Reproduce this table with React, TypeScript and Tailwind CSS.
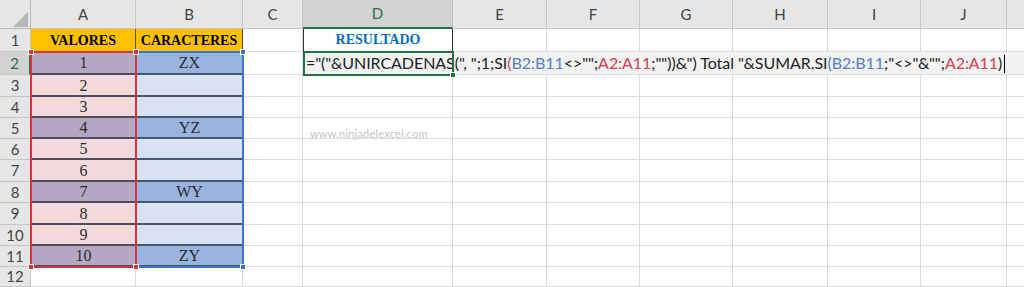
import React from 'react'

const columns = ['A', 'B', 'C', 'D', 'E', 'F', 'G', 'H', 'I', 'J', 'K']
const rowHeights = ['h-[23px]', 'h-[23px]', 'h-[22px]', 'h-[21px]', 'h-[21px]', 'h-[21px]', 'h-[22px]', 'h-[21px]', 'h-[22px]', 'h-[21px]', 'h-[21px]', 'h-[20px]']
const valores = ['1', '2', '3', '4', '5', '6', '7', '8', '9', '10']
const caracteres: Record<number, string> = { 0: 'ZX', 3: 'YZ', 6: 'WY', 9: 'ZY' }

const gridCols = 'grid grid-rows-1 grid-cols-[31px_105px_107px_60px_150px_94px_93px_93px_95px_93px_86px_60px]'
const cell = 'border-r border-b border-[#dadada]'
const serif = "font-['Liberation_Serif',serif]"

function HeaderRow() {
  return (
    <div className={`${gridCols} h-[29px]`}>
      <div className="relative bg-[#e6e6e6] border-r border-b border-[#bdbdbd]">
        <svg className="absolute left-[13px] top-[12px]" width="15" height="15" viewBox="0 0 15 15">
          <polygon points="15,0 15,15 0,15" fill="#b7b7b7" />
        </svg>
      </div>
      {columns.map((c) =>
        c === 'D' ? (
          <div key={c} className="flex items-center justify-center bg-[#d2d2d2] border-r border-[#bdbdbd] border-b-2 border-b-[#217346] text-[15px] leading-none text-[#217346]">
            {c}
          </div>
        ) : (
          <div key={c} className="flex items-center justify-center bg-[#e6e6e6] border-r border-b border-[#c6c6c6] text-[15px] leading-none text-[#444]">
            {c === 'K' ? '' : c}
          </div>
        )
      )}
    </div>
  )
}

function RowHeader({ n }: { n: number }) {
  if (n === 2) {
    return (
      <div className="flex items-center justify-center bg-[#d2d2d2] border-b border-[#c6c6c6] border-r-2 border-r-[#217346] text-[15px] leading-none text-[#217346]">
        {n}
      </div>
    )
  }
  return (
    <div className="flex items-center justify-center bg-[#e6e6e6] border-r border-b border-[#c6c6c6] text-[15px] leading-none text-[#444]">
      {n}
    </div>
  )
}

function Formula() {
  return (
    <span className="whitespace-nowrap text-[16px] leading-[20px] text-[#222] font-['Lato',sans-serif] tracking-[-0.05px]">
      ="("&amp;UNIRCADENAS(", ";1;SI<span className="text-[#d6405a]">(</span>
      <span className="text-[#4f7fd0]">B2:B11</span>&lt;&gt;"";
      <span className="text-[#d6404e]">A2:A11</span>;""))&amp;") Total "&amp;SUMAR.SI<span className="text-[#4f7fd0]">(</span>
      <span className="text-[#4f7fd0]">B2:B11</span>;"&lt;&gt;"&amp;"";
      <span className="text-[#d6404e]">A2:A11</span>)
      <span className="inline-block w-px h-[18px] bg-black align-middle ml-[2px]" />
    </span>
  )
}

// table cell with the thick dark rule under it
function TableCell({ fill, rule, text }: { fill: string; rule: string; text: string }) {
  return (
    <div className={`flex flex-col min-h-0 ${fill}`}>
      <div className={`flex-1 min-h-0 flex items-center justify-center pt-[1px] ${serif} text-[16px] leading-[18px] text-[#2b2b2b]`}>{text}</div>
      <div className={`h-[2px] shrink-0 ${rule}`} />
    </div>
  )
}

function DataRow({ n }: { n: number }) {
  const i = n - 2
  const strong = i % 3 === 0
  const h = rowHeights[n - 1]

  if (n === 1) {
    return (
      <div className={`${gridCols} ${h}`}>
        <RowHeader n={1} />
        <div className={`flex items-end justify-center pb-[2px] bg-[#ffc000] border-r border-r-[#5a4a2a] ${serif} font-bold text-[14px] leading-[18px] text-black`}>VALORES</div>
        <div className={`flex items-end justify-center pb-[2px] bg-[#ffc000] border-r border-r-[#5a4a2a] ${serif} font-bold text-[14px] leading-[18px] text-black`}>CARACTERES</div>
        <div className={cell} />
        <div className={`flex items-end justify-center pb-[2px] border-x border-x-[#333] border-b border-b-[#dadada] ${serif} font-bold text-[14px] leading-[18px] text-[#0070c0]`}>RESULTADO</div>
        {columns.slice(4).map((c) => <div key={c} className={cell} />)}
      </div>
    )
  }

  if (n === 12) {
    return (
      <div className={`${gridCols} ${h}`}>
        <RowHeader n={12} />
        {columns.map((c) => <div key={c} className={cell} />)}
      </div>
    )
  }

  return (
    <div className={`${gridCols} ${h}`}>
      <RowHeader n={n} />
      <TableCell fill={strong ? 'bg-[#b4a7c4]' : 'bg-[#f2d9db]'} rule="bg-[#514b60]" text={valores[i]} />
      <TableCell fill={strong ? 'bg-[#9bb3df]' : 'bg-[#d9e2f3]'} rule="bg-[#465670]" text={caracteres[i] ?? ''} />
      <div className={cell} />
      {n === 2 ? (
        <div className="relative col-span-8 flex items-center bg-[#f2f2f2] border-b border-[#dadada] pl-[3px]">
          <Formula />
          {/* active cell outline + fill handle */}
          <div className="absolute left-0 top-[-1px] w-[151px] h-[25px] border-2 border-[#217346]" />
          <div className="absolute left-[147px] top-[20px] w-[6px] h-[6px] bg-[#217346] border border-white" />
        </div>
      ) : (
        columns.slice(3).map((c) => <div key={c} className={cell} />)
      )}
    </div>
  )
}

export default function App() {
  return (
    <div className="relative w-[1024px] h-[287px] overflow-hidden bg-white font-['Lato',sans-serif]">
      <HeaderRow />
      {Array.from({ length: 12 }, (_, k) => (
        <DataRow key={k} n={k + 1} />
      ))}

      {/* range highlights for B2:B11 and A2:A11 */}
      <div className="absolute left-[135px] top-[51px] w-[109px] h-[217px] border-2 border-[#3b73d1]" />
      <div className="absolute left-[30px] top-[51px] w-[107px] h-[217px] border-2 border-[#d4343c]" />
      <div className="absolute left-[240px] top-[49px] w-[6px] h-[6px] bg-[#3b73d1] border border-white" />
      <div className="absolute left-[240px] top-[264px] w-[6px] h-[6px] bg-[#3b73d1] border border-white" />
      <div className="absolute left-[133px] top-[49px] w-[6px] h-[6px] bg-[#d4343c] border border-white" />
      <div className="absolute left-[133px] top-[264px] w-[6px] h-[6px] bg-[#d4343c] border border-white" />
      <div className="absolute left-[28px] top-[49px] w-[6px] h-[6px] bg-[#d4343c] border border-white" />
      <div className="absolute left-[28px] top-[264px] w-[6px] h-[6px] bg-[#d4343c] border border-white" />

      <div className="absolute left-[310px] top-[126px] text-[11px] text-[#c4c4c4] tracking-[0.2px]">www.ninjadelexcel.com</div>
    </div>
  )
}
